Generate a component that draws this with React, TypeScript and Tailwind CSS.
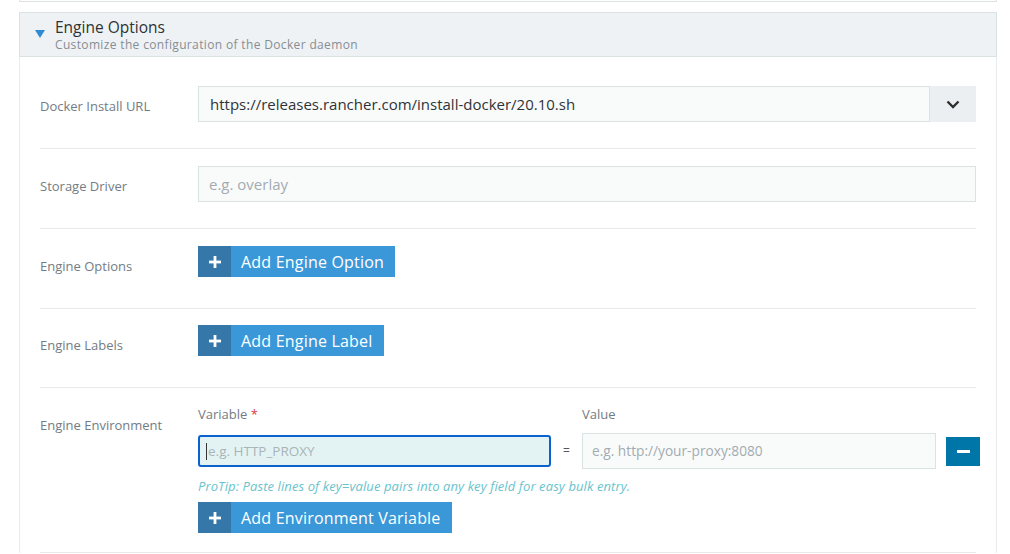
import React from "react";

const font = { fontFamily: '"Open Sans", "Liberation Sans", sans-serif' };

function PlusIcon() {
  return (
    <svg width="12" height="12" viewBox="0 0 12 12">
      <rect x="4.6" y="0" width="2.8" height="12" fill="#fff" />
      <rect x="0" y="4.6" width="12" height="2.8" fill="#fff" />
    </svg>
  );
}

function AddButton({ label }: { label: string }) {
  return (
    <button className="flex h-[31px] items-stretch text-white">
      <span className="flex w-[33px] items-center justify-center bg-[#3577a8]">
        <PlusIcon />
      </span>
      <span className="flex items-center bg-[#3a98d9] pl-[10px] pr-[11px] text-[16px] leading-none tracking-[0.2px]">
        {label}
      </span>
    </button>
  );
}

function Label({ children }: { children: React.ReactNode }) {
  return (
    <div className="w-[158px] shrink-0 pt-[13px] text-[13px] leading-[14px] text-[#737c84]">
      {children}
    </div>
  );
}

export default function App() {
  return (
    <div
      className="h-[554px] w-[1010px] overflow-hidden bg-white pl-[19px] pr-[13px]"
      style={font}
    >
      <div className="h-[2px] border-x border-b border-[#dde3e5]" />
      <div className="mt-[10px] flex h-[45px] items-start border border-[#dbe2e4] bg-[#eff2f4] pl-[15px]">
        <svg width="10" height="8" viewBox="0 0 10 8" className="mt-[17px]">
          <polygon points="0,0 10,0 5,8" fill="#2f8bd4" />
        </svg>
        <div className="ml-[10px] mt-[3px]">
          <div className="text-[15.5px] leading-[22px] text-[#2d3236]">Engine Options</div>
          <div className="text-[12px] leading-[14px] tracking-[0.35px] text-[#868e94]">
            Customize the configuration of the Docker daemon
          </div>
        </div>
      </div>
      <div className="border-x border-[#e8ecee] px-[20px]">
        {/* Row 1 */}
        <div className="flex h-[92px] border-b border-[#e6eaec] pt-[29px]">
          <Label>Docker Install URL</Label>
          <div className="flex h-[36px] flex-1">
            <div className="flex flex-1 items-center border border-[#dbe2e4] bg-[#f9fbfb] pl-[11px] text-[15px] text-[#2f3337]">
              https://releases.rancher.com/install-docker/20.10.sh
            </div>
            <div className="flex w-[46px] items-center justify-center bg-[#eceff1]">
              <svg width="14" height="9" viewBox="0 0 14 9">
                <polyline points="1.5,1.5 7,7 12.5,1.5" fill="none" stroke="#2e2e2e" strokeWidth="2.4" />
              </svg>
            </div>
          </div>
        </div>
        {/* Row 2 */}
        <div className="flex h-[80px] border-b border-[#e6eaec] pt-[17px]">
          <Label>Storage Driver</Label>
          <div className="flex h-[36px] flex-1 items-center border border-[#dbe2e4] bg-[#f9fbfb] pl-[10px] text-[15px] text-[#a3abb0]">
            e.g. overlay
          </div>
        </div>
        {/* Row 3 */}
        <div className="flex h-[80px] border-b border-[#e6eaec] pt-[17px]">
          <Label>Engine Options</Label>
          <AddButton label="Add Engine Option" />
        </div>
        {/* Row 4 */}
        <div className="flex h-[79px] border-b border-[#e6eaec] pt-[16px]">
          <Label>Engine Labels</Label>
          <AddButton label="Add Engine Label" />
        </div>
        {/* Row 5 */}
        <div className="flex h-[165px] border-b border-[#e6eaec] pt-[17px]">
          <Label>Engine Environment</Label>
          <div className="flex flex-col">
            <div className="flex h-[20px] items-center text-[13px] text-[#737c84]">
              <span className="w-[384px]">
                Variable <span className="text-[#e0383e]">*</span>
              </span>
              <span>Value</span>
            </div>
            <div className="mt-[8px] flex h-[36px] items-center">
              <div className="flex h-[32px] w-[353px] items-center rounded-[3px] border-2 border-[#0a62cf] bg-[#e3f3f3] pl-[6px] text-[13.5px] text-[#aab4b8]">
                <span className="mr-[1px] h-[17px] w-px bg-[#333]" />
                e.g. HTTP_PROXY
              </div>
              <div className="flex w-[31px] justify-center text-[12px] text-[#555]">=</div>
              <div className="flex h-[36px] w-[354px] items-center border border-[#dbe2e4] bg-[#f9fbfb] pl-[9px] text-[13.7px] text-[#a3abb0]">
                e.g. http://your-proxy:8080
              </div>
              <div className="ml-[10px] flex h-[29px] w-[34px] items-center justify-center bg-[#0075a8]">
                <span className="h-[3px] w-[13px] bg-white" />
              </div>
            </div>
            <div className="mt-[9px] whitespace-nowrap text-[13px] italic leading-[16px] tracking-[0.1px] text-[#69c3cc]">
              ProTip: Paste lines of key=value pairs into any key field for easy bulk entry.
            </div>
            <div className="mt-[8px]">
              <AddButton label="Add Environment Variable" />
            </div>
          </div>
        </div>
      </div>
    </div>
  );
}
